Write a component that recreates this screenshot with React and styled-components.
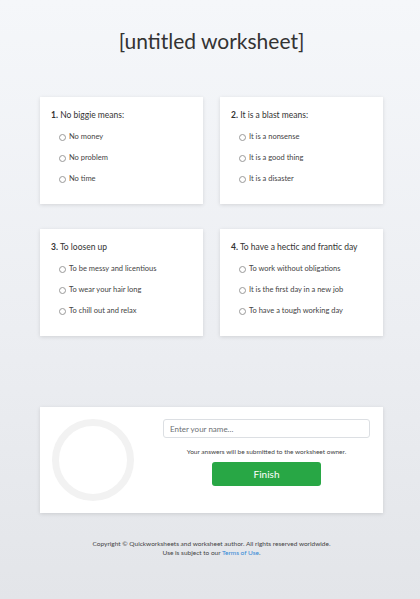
import React from 'react';
import styled, { createGlobalStyle } from 'styled-components';

const GlobalStyle = createGlobalStyle`
  html, body {
    margin: 0;
    padding: 0;
  }
  body {
    min-height: 599px;
    background: linear-gradient(180deg, #f5f7fa 0%, #eceef2 55%, #e3e5e9 100%);
    font-family: Lato, "Open Sans", sans-serif;
    color: #3a3a3a;
  }
`;

const questions = [
  { n: 1, text: 'No biggie means:', options: ['No money', 'No problem', 'No time'] },
  { n: 2, text: 'It is a blast means:', options: ['It is a nonsense', 'It is a good thing', 'It is a disaster'] },
  { n: 3, text: 'To loosen up', options: ['To be messy and licentious', 'To wear your hair long', 'To chill out and relax'] },
  {
    n: 4,
    text: 'To have a hectic and frantic day',
    options: ['To work without obligations', 'It is the first day in a new job', 'To have a tough working day'],
  },
];

const App = () =>
  <Page>
    <GlobalStyle />
    <Title>[untitled worksheet]</Title>
    <Grid>
      {questions.map(q =>
        <Card key={q.n}>
          <Question>
            <Num>{q.n}.</Num> {q.text}
          </Question>
          <Options>
            {q.options.map(o =>
              <Option key={o}>
                <Radio />
                {o}
              </Option>
            )}
          </Options>
        </Card>
      )}
    </Grid>
    <SubmitCard>
      <Ring />
      <SubmitForm>
        <NameInput placeholder="Enter your name..." />
        <Note>Your answers will be submitted to the worksheet owner.</Note>
        <FinishButton>Finish</FinishButton>
      </SubmitForm>
    </SubmitCard>
    <Footer>
      Copyright © Quickworksheets and worksheet author. All rights reserved worldwide.
      <br />
      Use is subject to our <FooterLink href="#">Terms of Use</FooterLink>.
    </Footer>
  </Page>;

const Page = styled.div`
  display: flex;
  flex-direction: column;
  width: 343px;
  margin-left: 40px;
`;

const Title = styled.h1`
  margin: 28px 0 43px;
  font-size: 21px;
  line-height: 26px;
  font-weight: 400;
  text-align: center;
  color: #333;
`;

const Grid = styled.div`
  display: grid;
  grid-template-columns: 1fr 1fr;
  column-gap: 17px;
  row-gap: 25px;
`;

const Card = styled.div`
  background: #fff;
  padding: 12px 11px 19px;
  box-shadow: 0 1px 4px rgba(0, 0, 0, 0.12);
`;

const Question = styled.div`
  font-size: 8.5px;
  line-height: 12px;
  color: #333;
`;

const Num = styled.b`
  font-weight: 700;
`;

const Options = styled.div`
  display: flex;
  flex-direction: column;
  gap: 9px;
  margin-top: 10px;
  padding-left: 8px;
`;

const Option = styled.div`
  display: flex;
  align-items: center;
  gap: 3px;
  font-size: 7.5px;
  line-height: 12px;
  color: #444;
`;

const Radio = styled.span`
  width: 5px;
  height: 5px;
  border: 1px solid #999;
  border-radius: 50%;
  background: #fff;
`;

const SubmitCard = styled.div`
  display: flex;
  align-items: center;
  gap: 29px;
  margin-top: 71px;
  padding: 12px 13px 12px 12px;
  height: 82px;
  background: #fff;
  box-shadow: 0 1px 4px rgba(0, 0, 0, 0.12);
`;

const Ring = styled.div`
  flex: none;
  width: 68px;
  height: 68px;
  border: 7px solid #f2f2f2;
  border-radius: 50%;
`;

const SubmitForm = styled.div`
  flex: 1;
  display: flex;
  flex-direction: column;
  align-items: center;
  align-self: flex-start;
`;

const NameInput = styled.input`
  box-sizing: border-box;
  width: 100%;
  height: 19px;
  padding: 0 6px;
  border: 1px solid #dcdfe3;
  border-radius: 3px;
  font-family: Lato, "Open Sans", sans-serif;
  font-size: 8px;
  color: #333;
  &::placeholder {
    color: #6c6f73;
  }
`;

const Note = styled.div`
  margin-top: 9px;
  font-size: 6.5px;
  line-height: 9px;
  color: #444;
`;

const FinishButton = styled.button`
  margin-top: 6px;
  width: 109px;
  height: 24px;
  border: none;
  border-radius: 3px;
  background: #28a745;
  color: #fff;
  font-family: Lato, "Open Sans", sans-serif;
  font-size: 10px;
`;

const Footer = styled.div`
  margin-top: 26px;
  font-size: 6.5px;
  line-height: 9px;
  text-align: center;
  color: #444;
`;

const FooterLink = styled.a`
  color: #2f86d6;
  text-decoration: none;
`;

export default App;
